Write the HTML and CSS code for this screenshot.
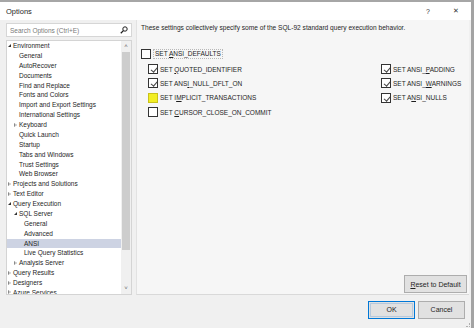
FILE: index.html
```html
<!DOCTYPE html>
<html lang="en">
<head>
    <meta charset="UTF-8">
    <title>Options</title>
    <link rel="stylesheet" href="styles.css">
</head>
<body>
<div class="window">
    <div class="titlebar">
        <span class="title">Options</span>
        <span class="tb-btn">?</span>
        <span class="tb-btn close">&#x2715;</span>
    </div>

    <div class="content">
        <!-- coluna da esquerda: busca + arvore -->
        <div class="left">
            <div class="search">
                <span class="placeholder">Search Options (Ctrl+E)</span>
                <svg class="lens" width="8" height="8" viewBox="0 0 8 8">
                    <circle cx="5" cy="3" r="2.2" fill="none" stroke="#1e1e1e" stroke-width="1"/>
                    <line x1="3.4" y1="4.6" x2="0.8" y2="7.2" stroke="#1e1e1e" stroke-width="1.3"/>
                </svg>
            </div>
            <div class="tree">
                <ul class="items">
                    <li class="l0"><i class="open"></i>Environment</li>
                    <li class="l1">General</li>
                    <li class="l1">AutoRecover</li>
                    <li class="l1">Documents</li>
                    <li class="l1">Find and Replace</li>
                    <li class="l1">Fonts and Colors</li>
                    <li class="l1">Import and Export Settings</li>
                    <li class="l1">International Settings</li>
                    <li class="l1"><i class="closed"></i>Keyboard</li>
                    <li class="l1">Quick Launch</li>
                    <li class="l1">Startup</li>
                    <li class="l1">Tabs and Windows</li>
                    <li class="l1">Trust Settings</li>
                    <li class="l1">Web Browser</li>
                    <li class="l0"><i class="closed"></i>Projects and Solutions</li>
                    <li class="l0"><i class="closed"></i>Text Editor</li>
                    <li class="l0"><i class="open"></i>Query Execution</li>
                    <li class="l1"><i class="open"></i>SQL Server</li>
                    <li class="l2">General</li>
                    <li class="l2">Advanced</li>
                    <li class="l2 selected">ANSI</li>
                    <li class="l2">Live Query Statistics</li>
                    <li class="l1"><i class="closed"></i>Analysis Server</li>
                    <li class="l0"><i class="closed"></i>Query Results</li>
                    <li class="l0"><i class="closed"></i>Designers</li>
                    <li class="l0"><i class="closed"></i>Azure Services</li>
                </ul>
                <div class="scrollbar">
                    <span class="arrow">&#x2C4;</span>
                    <div class="track"><div class="thumb"></div></div>
                    <span class="arrow">&#x2C5;</span>
                </div>
            </div>
        </div>

        <!-- painel da direita -->
        <div class="panel">
            <p class="intro">These settings collectively specify some of the SQL-92 standard query execution behavior.</p>

            <label class="opt top"><span class="box"></span><span class="focus">SET <u>A</u>NSI_DEFAULTS</span></label>

            <div class="cols">
                <div class="col">
                    <label class="opt"><span class="box checked"></span><span>SET <u>Q</u>UOTED_IDENTIFIER</span></label>
                    <label class="opt"><span class="box checked"></span><span>SET ANS<u>I</u>_NULL_DFLT_ON</span></label>
                    <label class="opt"><span class="box hilite"></span><span>SET I<u>M</u>PLICIT_TRANSACTIONS</span></label>
                    <label class="opt"><span class="box"></span><span>SET <u>C</u>URSOR_CLOSE_ON_COMMIT</span></label>
                </div>
                <div class="col right">
                    <label class="opt"><span class="box checked"></span><span>SET ANSI_<u>P</u>ADDING</span></label>
                    <label class="opt"><span class="box checked"></span><span>SET ANSI_<u>W</u>ARNINGS</span></label>
                    <label class="opt"><span class="box checked"></span><span>SET A<u>N</u>SI_NULLS</span></label>
                </div>
            </div>

            <div class="reset-row">
                <button class="btn"><u>R</u>eset to Default</button>
            </div>
        </div>
    </div>

    <div class="footer">
        <button class="btn ok">OK</button>
        <button class="btn">Cancel</button>
        <span class="grip"></span>
    </div>
</div>
</body>
</html>
```

FILE: styles.css
```css
* {
    box-sizing: border-box;
}
body {
    margin: 0;
    background: #f0f0f0;
    font-family: "Liberation Sans", Arial, sans-serif;
    color: #1e1e1e;
}
.window {
    width: 474px;
    height: 328px;
    border-top: 2px solid #a6a6a6;
    border-right: 3px solid #a3a3a3;
    background: #f0f0f0;
    display: flex;
    flex-direction: column;
    position: relative;
}
.titlebar {
    height: 18px;
    background: #fff;
    display: flex;
    align-items: center;
    padding-left: 6px;
    font-size: 7.5px;
}
.title {
    flex: 1;
}
.tb-btn {
    width: 28px;
    text-align: center;
    font-size: 7px;
    color: #333;
}
.tb-btn.close {
    margin-right: 1px;
}
.content {
    display: flex;
    height: 275px;
}
.left {
    width: 132px;
    padding: 3px 0 0 6px;
    display: flex;
    flex-direction: column;
    gap: 3px;
}
.search {
    height: 14px;
    background: #fff;
    border: 1px solid #d6d6d6;
    display: flex;
    align-items: center;
    padding: 0 3px;
    font-size: 6.5px;
}
.placeholder {
    flex: 1;
    color: #7a7a7a;
}
.tree {
    flex: 1;
    display: flex;
    background: #fff;
    border: 1px solid #d4d4d4;
    overflow: hidden;
}
.items {
    flex: 1;
    list-style: none;
    margin: 0;
    padding: 0;
    font-size: 6.5px;
    overflow: hidden;
}
.items li {
    height: 9.88px;
    line-height: 9.88px;
    white-space: nowrap;
    position: relative;
}
.items .l0 { padding-left: 6px; }
.items .l1 { padding-left: 12px; }
.items .l2 { padding-left: 17px; }
.items li.selected {
    background: #cdd3e3;
}
.items i {
    display: inline-block;
    width: 6px;
    margin-left: -6px;
    height: 9px;
    vertical-align: top;
    position: relative;
}
.items i.open::before {
    content: "";
    position: absolute;
    left: 1px;
    top: 3px;
    border-left: 3px solid transparent;
    border-bottom: 3px solid #333;
}
.items i.closed::before {
    content: "";
    position: absolute;
    left: 1px;
    top: 2.5px;
    width: 0;
    height: 0;
    border-top: 2.5px solid transparent;
    border-bottom: 2.5px solid transparent;
    border-left: 3px solid #8a8a8a;
}
.items i.closed::after {
    content: "";
    position: absolute;
    left: 1.5px;
    top: 3.6px;
    width: 0;
    height: 0;
    border-top: 1.4px solid transparent;
    border-bottom: 1.4px solid transparent;
    border-left: 1.6px solid #fff;
}
.scrollbar {
    width: 10px;
    background: #f0f0f0;
    display: flex;
    flex-direction: column;
    align-items: center;
    font-size: 6px;
    color: #606060;
}
.arrow {
    height: 11px;
    line-height: 11px;
}
.track {
    flex: 1;
    width: 100%;
    padding: 0 1px;
}
.thumb {
    height: 198px;
    background: #cdcdcd;
}
.panel {
    flex: 1;
    margin-left: 4px;
    margin-right: 2px;
    background: #f6f6f6;
    border-left: 1px solid #e2e2e2;
    border-bottom: 1px solid #d9d9d9;
    padding: 0 0 0 4px;
    font-size: 6.5px;
    display: flex;
    flex-direction: column;
}
.intro {
    margin: 0;
    height: 16px;
    line-height: 16px;
    font-size: 6.6px;
}
.opt {
    display: flex;
    align-items: center;
    height: 10px;
    white-space: nowrap;
}
.opt.top {
    margin-top: 13px;
}
.focus {
    border: 1px dotted #b8b8b8;
    padding: 0 1px;
    line-height: 8px;
}
.box {
    width: 10px;
    height: 10px;
    border: 1px solid #333;
    background: #fff;
    margin-right: 2px;
    position: relative;
    flex: none;
}
.box.checked::after {
    content: "";
    position: absolute;
    left: 2.6px;
    top: 0.8px;
    width: 2.6px;
    height: 5.4px;
    border-right: 1px solid #444;
    border-bottom: 1px solid #444;
    transform: rotate(40deg);
}
.box.hilite {
    background: #f2ee24;
    border-color: #c9c21a;
}
.cols {
    display: flex;
    margin-top: 5px;
    padding-left: 7px;
}
.col {
    display: flex;
    flex-direction: column;
    gap: 4.4px;
    width: 233px;
}
.col.right {
    width: auto;
}
.reset-row {
    margin-top: auto;
    display: flex;
    justify-content: flex-end;
    padding: 0 2px 1px 0;
}
.btn {
    font-family: "Liberation Sans", Arial, sans-serif;
    font-size: 7px;
    color: #1e1e1e;
    background: #e1e1e1;
    border: 1px solid #adadad;
    height: 18px;
    padding: 0 3px;
}
.reset-row .btn {
    width: 63px;
}
.footer {
    flex: 1;
    display: flex;
    justify-content: flex-end;
    align-items: center;
    gap: 3px;
    padding: 0 6px 4px 0;
}
.footer .btn {
    width: 47px;
    height: 18px;
}
.btn.ok {
    border: 1px solid #0078d7;
    box-shadow: inset 0 0 0 1px #e1e1e1, inset 0 0 0 2px #b6c9dd;
}
.grip {
    position: absolute;
    right: 1px;
    bottom: 1px;
    width: 4px;
    height: 4px;
    border-right: 1px dotted #b0b0b0;
    border-bottom: 1px dotted #b0b0b0;
}
```
